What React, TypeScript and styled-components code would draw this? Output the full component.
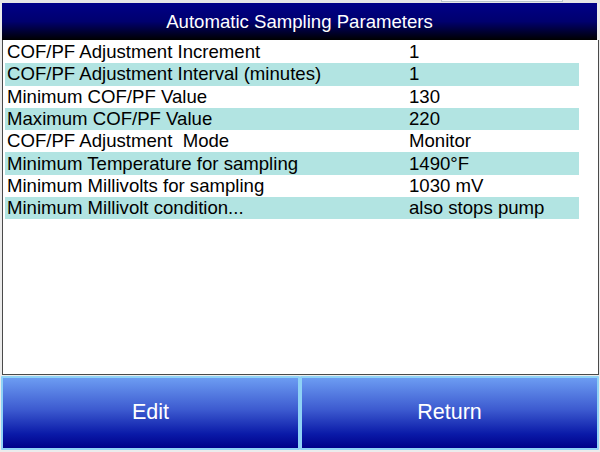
import React from "react";
import styled, { createGlobalStyle } from "styled-components";

const GlobalStyle = createGlobalStyle`
  html, body {
    margin: 0;
    padding: 0;
    background: #ececec;
  }
  body {
    font-family: "Liberation Sans", Arial, sans-serif;
  }
`;

const Screen = styled.div`
  width: 600px;
  height: 452px;
  display: flex;
  flex-direction: column;
  background: #ececec;
  overflow: hidden;
`;

const TopStrip = styled.div`
  height: 3px;
  display: flex;
  padding-left: 441px;
  background: #e6e6e6;
`;

const Tab = styled.div`
  width: 122px;
  height: 2px;
  background: #f4f6f8;
  border: 1px solid #b8c4cc;
  border-top: none;
  box-sizing: border-box;
`;

const Header = styled.div`
  height: 37px;
  margin: 0 3px 0 2px;
  display: flex;
  align-items: center;
  justify-content: center;
  background: linear-gradient(to bottom, #000088 0%, #00006e 50%, #000000 100%);
  color: #ffffff;
  font-size: 18.6px;
`;

const Content = styled.div`
  height: 335px;
  margin: 0 1px 0 2px;
  box-sizing: border-box;
  background: #ffffff;
  border: 1px solid #4a4a4a;
  border-top: none;
  padding: 1px 19px 0 2px;
  display: flex;
  flex-direction: column;
`;

const Row = styled.div<{ $shaded: boolean }>`
  height: 22.3px;
  display: grid;
  grid-template-columns: 402px 1fr;
  align-items: center;
  padding-left: 2px;
  background: ${({ $shaded }) => ($shaded ? "#b2e4e2" : "transparent")};
  color: #000000;
  font-size: 18.6px;
  white-space: nowrap;
`;

const Value = styled.span`
  padding-left: 0;
`;

const ButtonBar = styled.div`
  height: 75px;
  margin: 1px 1px 0 1px;
  display: grid;
  grid-template-columns: 1fr 1fr;
`;

const SoftButton = styled.button`
  box-sizing: border-box;
  height: 74px;
  margin: 0;
  border: 2px solid #8fd2f6;
  border-radius: 1px;
  background: linear-gradient(to bottom, #6c9cf2 0%, #3d5bd0 45%, #0a1aa8 80%, #00008a 100%);
  color: #ffffff;
  font-family: "Liberation Sans", Arial, sans-serif;
  font-size: 21.5px;
  display: flex;
  align-items: center;
  justify-content: center;
  padding: 0 0 2px 0;
  cursor: pointer;
`;

const params: [string, string][] = [
  ["COF/PF Adjustment Increment", "1"],
  ["COF/PF Adjustment Interval (minutes)", "1"],
  ["Minimum COF/PF Value", "130"],
  ["Maximum COF/PF Value", "220"],
  ["COF/PF Adjustment\u00a0 Mode", "Monitor"],
  ["Minimum Temperature for sampling", "1490°F"],
  ["Minimum Millivolts for sampling", "1030 mV"],
  ["Minimum Millivolt condition...", "also stops pump"],
];

export default function App() {
  return (
    <>
      <GlobalStyle />
      <Screen>
        <TopStrip>
          <Tab />
        </TopStrip>
        <Header>Automatic Sampling Parameters</Header>
        <Content>
          {params.map(([label, value], i) => (
            <Row key={label} $shaded={i % 2 === 1}>
              <span>{label}</span>
              <Value>{value}</Value>
            </Row>
          ))}
        </Content>
        <ButtonBar>
          <SoftButton>Edit</SoftButton>
          <SoftButton>Return</SoftButton>
        </ButtonBar>
      </Screen>
    </>
  );
}
